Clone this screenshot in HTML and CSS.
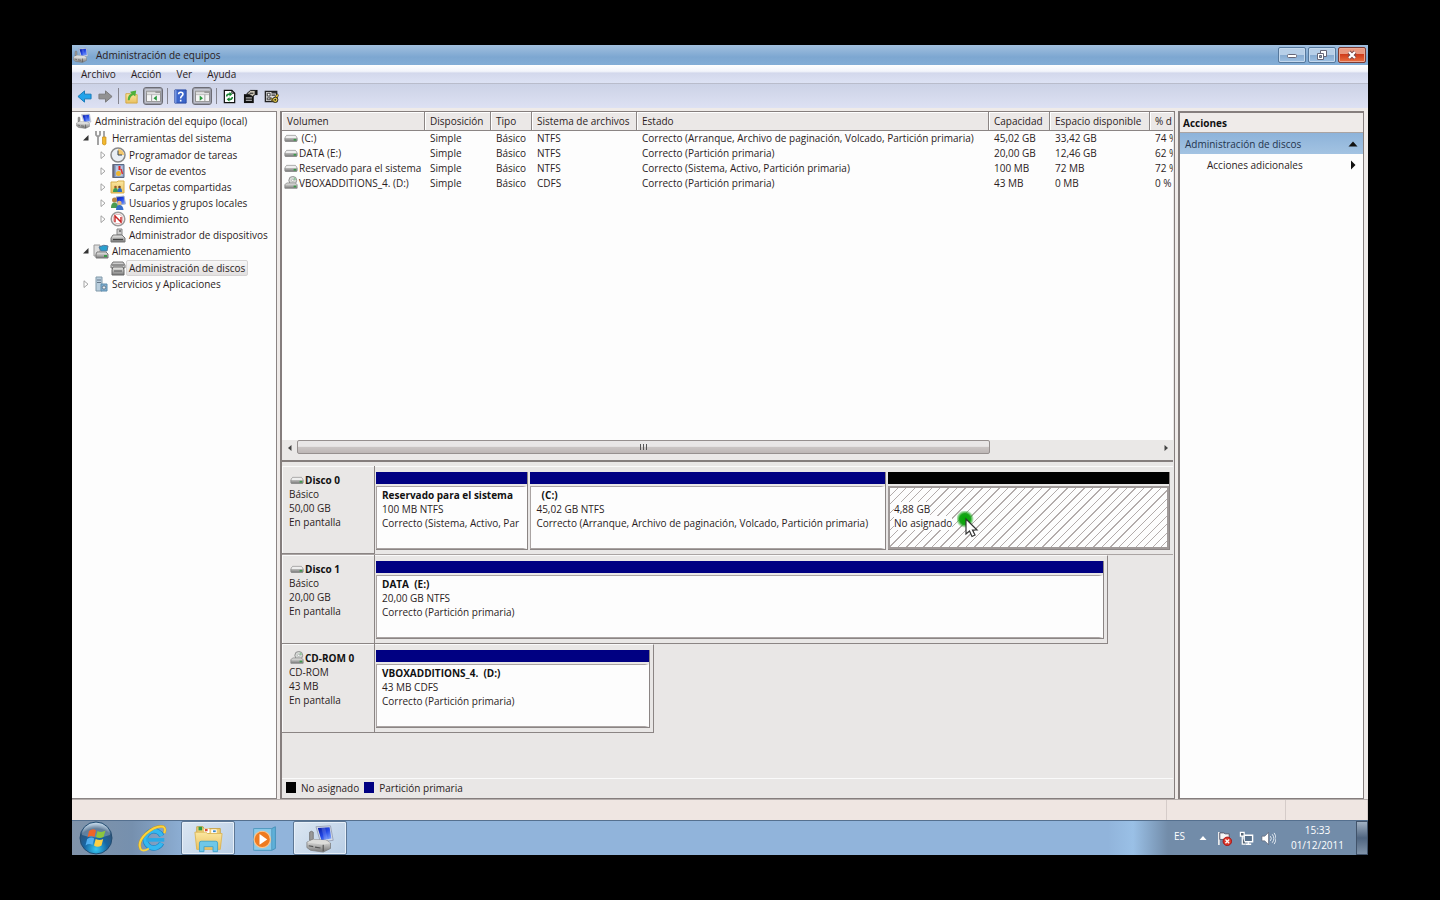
FILE: index.html
```html
<!DOCTYPE html>
<html lang="es">
  <head>
    <meta charset="utf-8">
    <title>Administración de equipos</title>
    <link rel="stylesheet" href="styles.css">
  </head>

  <body>
    <!-- shared icons -->
    <svg class="defs" aria-hidden="true">
      <defs>
        <linearGradient id="metal" x1="0" y1="0" x2="0" y2="1">
          <stop offset="0" stop-color="#f2f2f0"/><stop offset="1" stop-color="#777"/>
        </linearGradient>
        <linearGradient id="screenblue" x1="0" y1="0" x2="1" y2="1">
          <stop offset="0" stop-color="#0a1a9c"/><stop offset="0.5" stop-color="#2348e8"/><stop offset="1" stop-color="#8fb4ff"/>
        </linearGradient>
        <linearGradient id="gold" x1="0" y1="0" x2="0" y2="1">
          <stop offset="0" stop-color="#fbe7a0"/><stop offset="1" stop-color="#e9c060"/>
        </linearGradient>
        <radialGradient id="orb" cx="0.5" cy="0.85" r="0.8">
          <stop offset="0" stop-color="#35c8f2"/><stop offset="0.45" stop-color="#1766a4"/><stop offset="0.8" stop-color="#2f5479"/><stop offset="1" stop-color="#a9c4dc"/>
        </radialGradient>
        <radialGradient id="click">
          <stop offset="0" stop-color="#00a800"/><stop offset="0.6" stop-color="#16a516"/><stop offset="1" stop-color="#16a516" stop-opacity="0"/>
        </radialGradient>
      </defs>
      <symbol id="computer" viewBox="0 0 32 32">
        <path d="M11 3l16-1 3 16-14 2z" fill="#d4dbe8" stroke="#8a93a8" stroke-width=".8"/>
        <path d="M13 4.500l13-1 2 12.500-11 2z" fill="url(#screenblue)"/>
        <path d="M17 4.200l4-.3 3 12.800-4 .7z" fill="#fff" opacity=".15"/>
        <path d="M4 9q2-2 4 0v9H4z" fill="#999" stroke="#666" stroke-width=".8"/>
        <path d="M20 19l4-1 3 4-7 1z" fill="#aaa"/>
        <path d="M1 20l7-3 14 1 5 3v6l-8 4-14-2-4-3z" fill="url(#metal)" stroke="#777" stroke-width=".8"/>
        <path d="M1 20l7-3 14 1 5 3-8 2z" fill="#dcdcda"/>
        <path d="M19 23v7M3 24l5 1M10 25.500l6 1" fill="none" stroke="#555" stroke-width="1.300"/>
      </symbol>
      <symbol id="drive" viewBox="0 0 16 16">
        <path d="M3 5h10l2 3v3q0 1-1 1H2q-1 0-1-1V8z" fill="url(#metal)" stroke="#8a8a8a"/>
        <path d="M3 5.500h10l1.500 2.500h-13z" fill="#eee"/>
        <path d="M11 9h3v2h-3z" fill="#3b9a48"/>
      </symbol>
      <symbol id="cdrive" viewBox="0 0 16 16">
        <circle cx="10" cy="5" r="4.500" fill="#d5d8d5" stroke="#888"/>
        <path d="M10 5l2-4 2 3z" fill="#8fc79a"/>
        <circle cx="10" cy="5" r="1.300" fill="#fff" stroke="#888" stroke-width=".5"/>
        <path d="M3 8h10l2 2v4H1v-4z" fill="url(#metal)" stroke="#8a8a8a"/>
        <path d="M11 11h3v2h-3z" fill="#3b9a48"/>
      </symbol>
      <symbol id="open" viewBox="0 0 8 8"><path d="M6.500 1v5.500H1z" fill="#333"/></symbol>
      <symbol id="closed" viewBox="0 0 8 8"><path d="M2 .8l4 3.400-4 3.300z" fill="#fff" stroke="#999" stroke-width=".9"/></symbol>
      <symbol id="panes" viewBox="0 0 16 16">
        <path d="M.5 2.500h15v11H.5z" fill="#f5f5f5" stroke="#888"/>
        <path d="M0 2h16v2.500H0z" fill="#999"/><path d="M1 3h9v1H1z" fill="#eee"/>
        <path d="M1 6h14" stroke="#bbb"/>
      </symbol>
    </svg>

    <div class="window">
      <header class="titlebar">
        <svg class="icon"><use href="#computer"/></svg>
        <h1>Administración de equipos</h1>
        <div class="caption-buttons">
          <button type="button" aria-label="Minimizar"><svg viewBox="0 0 14 12"><rect x="2.500" y="5.500" width="9" height="3" rx="1" fill="#fff" stroke="#667"/></svg></button>
          <button type="button" aria-label="Restaurar"><svg viewBox="0 0 14 12"><path d="M5.500 1.500h6v6h-6z" fill="#fff" stroke="#667"/><path d="M2.500 4.500h6v6h-6z" fill="#fff" stroke="#667"/><path d="M4.500 6.500h2v2h-2z" fill="#8ab" stroke="#667"/></svg></button>
          <button type="button" class="close" aria-label="Cerrar"><svg viewBox="0 0 14 12"><path d="M4 3l6 6m0-6l-6 6" stroke="#744" stroke-width="4"/><path d="M4 3l6 6m0-6l-6 6" stroke="#fff" stroke-width="2.300"/></svg></button>
        </div>
      </header>

      <nav class="menubar">
        <a href="#archivo">Archivo</a>
        <a href="#accion">Acción</a>
        <a href="#ver">Ver</a>
        <a href="#ayuda">Ayuda</a>
      </nav>

      <div class="toolbar">
        <button type="button" aria-label="Atrás"><svg viewBox="0 0 16 16"><path d="M1 8l7-6v3.500h7v5H8V14z" fill="#22a3ea" stroke="#1579b8"/></svg></button>
        <button type="button" aria-label="Adelante"><svg viewBox="0 0 16 16"><path d="M15 8L8 2v3.500H1v5h7V14z" fill="#929292" stroke="#777"/></svg></button>
        <span class="sep"></span>
        <button type="button" aria-label="Subir un nivel"><svg viewBox="0 0 16 16"><path d="M2 5h5l1 1h6v9H2z" fill="url(#gold)" stroke="#d3a945"/><path d="M4 12q0-6 4-7L6.500 3l6.500-1.500L12 8l-2-1.500q-3 1-4 5.500z" fill="#4fb03a"/></svg></button>
        <button type="button" class="pressed" aria-label="Mostrar árbol"><svg viewBox="0 0 16 16"><use href="#panes"/><path d="M6 6v7" stroke="#999"/><path d="M11.500 7v5.500L8 9.800z" fill="#24983a"/></svg></button>
        <span class="sep"></span>
        <button type="button" aria-label="Ayuda"><svg viewBox="0 0 16 16"><path d="M2 1h12v14H2z" fill="#3c66cb" stroke="#2848a0"/><path d="M3 1v14" stroke="#9cb7f2"/><path d="M6 5.500q0-2 2.300-2t2.300 2q0 1-1.300 2T8.200 10M8.200 11.500v1.800" fill="none" stroke="#fff" stroke-width="1.700"/></svg></button>
        <button type="button" class="pressed" aria-label="Mostrar panel de acciones"><svg viewBox="0 0 16 16"><use href="#panes"/><path d="M10.500 6v7" stroke="#999"/><path d="M5 7v5.500l3.500-2.700z" fill="#24983a"/></svg></button>
        <span class="sep"></span>
        <button type="button" aria-label="Actualizar"><svg viewBox="0 0 16 16"><path d="M2.500 1.500h8l3 3v10h-11z" fill="#fff" stroke="#111" stroke-width="1.300"/><path d="M10.500 1.500v3h3" fill="none" stroke="#111"/><path d="M5 8q0-3 4-2.500M11 8.500q0 3-4 2.500" fill="none" stroke="#188632" stroke-width="1.700"/><path d="M8 3l3 2.500-3 2.500zM8 8.800L5 11l3 2.500z" fill="#188632"/></svg></button>
        <button type="button" aria-label="Propiedades"><svg viewBox="0 0 16 16"><path d="M1 5.500h10.500V15H1z" fill="#111"/><path d="M3 9.500h6.500M3 12h6.500" stroke="#ddd"/><path d="M4 5l4-3.500h5V6l-3 2-3-2z" fill="#c9c2b4" stroke="#111"/><path d="M13 1h2.500v5.500H13z" fill="#111"/><path d="M7 4.500h4" stroke="#111"/></svg></button>
        <button type="button" aria-label="Configuración"><svg viewBox="0 0 16 16"><path d="M1.500 2.500h12v11h-12z" fill="#ddd" stroke="#222" stroke-width="1.500"/><path d="M3.500 4.500h3v3h-3zM3.500 9.500h3v2h-3z" fill="#fff" stroke="#333"/><path d="M8 4h5M8 6.500h4" stroke="#333" stroke-width="1.400"/><path d="M7 9l3 2 4-6 1.500 1.500L12 14l-4-1z" fill="#edc62d" stroke="#222" stroke-width=".7"/><circle cx="12" cy="11.500" r="2.800" fill="#f0d447" stroke="#222"/><circle cx="12" cy="11.500" r="1" fill="#222"/></svg></button>
      </div>

      <main class="panes">
        <!-- console tree -->
        <aside class="tree">
          <ul>
            <li>
              <a href="#equipo" class="root"><svg class="icon"><use href="#computer"/></svg>Administración del equipo (local)</a>
              <ul>
                <li>
                  <a href="#herramientas"><svg class="arrow"><use href="#open"/></svg><svg class="icon" viewBox="0 0 16 16"><path d="M3 1v4l2 2 2-2V1M5 7v8" fill="none" stroke="#999" stroke-width="1.800"/><path d="M11 1v6" stroke="#888" stroke-width="1.500"/><path d="M9.500 7h3.500v7q-1.700 2-3.500 0z" fill="#f1b931" stroke="#c98e17" stroke-width=".7"/></svg>Herramientas del sistema</a>
                  <ul>
                    <li><a href="#tareas"><svg class="arrow"><use href="#closed"/></svg><svg class="icon" viewBox="0 0 16 16"><circle cx="8" cy="8" r="7" fill="#e9eef4" stroke="#888" stroke-width="1.500"/><path d="M8 8V2a6 6 0 0 1 6 6z" fill="#f3c76c"/><path d="M8 3.500V8h4" fill="none" stroke="#345"/></svg>Programador de tareas</a></li>
                    <li><a href="#eventos"><svg class="arrow"><use href="#closed"/></svg><svg class="icon" viewBox="0 0 16 16"><path d="M3 1.500h11v13H3z" fill="#8fa3c6" stroke="#5a6985"/><path d="M3.500 1v14" stroke="#667" stroke-width="2"/><path d="M6 3h6.500v10H6z" fill="#b9c9e4"/><path d="M9.500 3v4" stroke="#d22" stroke-width="2"/><circle cx="8.500" cy="10.500" r="2.500" fill="#ecb52f"/><path d="M11 6l1.500 5" stroke="#d33" stroke-width="1.500"/></svg>Visor de eventos</a></li>
                    <li><a href="#carpetas"><svg class="arrow"><use href="#closed"/></svg><svg class="icon" viewBox="0 0 16 16"><path d="M1 3h6l1-1h6v12H1z" fill="url(#gold)" stroke="#d6ae4c"/><circle cx="5.500" cy="8" r="1.300" fill="#9c5b25"/><circle cx="9.500" cy="8" r="1.300" fill="#74451d"/><path d="M3 13q0-4 2.500-4T8 13z" fill="#3b9952"/><path d="M7.500 13q0-4 2.300-4t2.200 4z" fill="#2d6cc4"/></svg>Carpetas compartidas</a></li>
                    <li><a href="#usuarios"><svg class="arrow"><use href="#closed"/></svg><svg class="icon" viewBox="0 0 16 16"><path d="M6 2l8-1 1.500 8-8 1z" fill="url(#screenblue)" stroke="#a8b4c8"/><circle cx="4.500" cy="5" r="2.500" fill="#b98346"/><path d="M1 13q0-5.500 3.500-5.500T8 13z" fill="#4a9b52"/><circle cx="9.500" cy="8" r="2.200" fill="#e3b77c"/><path d="M6 15q0-5 3.500-5t4 5z" fill="#356ecb"/></svg>Usuarios y grupos locales</a></li>
                    <li><a href="#rendimiento"><svg class="arrow"><use href="#closed"/></svg><svg class="icon" viewBox="0 0 16 16"><circle cx="8" cy="8" r="6.800" fill="#fff" stroke="#999" stroke-width="1.500"/><circle cx="8" cy="8" r="4.800" fill="none" stroke="#daa"/><path d="M5 11V5l6 6V6" fill="none" stroke="#c92525" stroke-width="1.400"/></svg>Rendimiento</a></li>
                    <li><a href="#dispositivos"><span class="arrow"></span><svg class="icon" viewBox="0 0 16 16"><path d="M7 2h5v6H7z" fill="#ccc" stroke="#888"/><path d="M9 4h2" stroke="#333"/><path d="M3 8h9l3 3v4H1v-4z" fill="url(#metal)" stroke="#777"/><path d="M3 12.500h10" stroke="#444" stroke-width="1.300"/></svg>Administrador de dispositivos</a></li>
                  </ul>
                </li>
                <li>
                  <a href="#almacenamiento"><svg class="arrow"><use href="#open"/></svg><svg class="icon" viewBox="0 0 16 16"><path d="M1 2h6v11H1z" fill="#ddd" stroke="#999"/><path d="M6 4q5-3 9-1l-1 5H8z" fill="#2aa0cf" stroke="#579"/><path d="M4 9h9l2 2v4H3v-4z" fill="url(#metal)" stroke="#777"/><path d="M11 12h3v2h-3z" fill="#3b9a48"/></svg>Almacenamiento</a>
                  <ul>
                    <li><a href="#discos"><span class="arrow"></span><svg class="icon" viewBox="0 0 16 16"><path d="M3 2h10l2 3v3H1V5z" fill="#ccc" stroke="#777"/><path d="M3 7h10l1 3v5H2v-5z" fill="url(#metal)" stroke="#666"/><path d="M4 11h8M2 5h12" stroke="#555"/></svg><span class="selected">Administración de discos</span></a></li>
                  </ul>
                </li>
                <li><a href="#servicios"><svg class="arrow"><use href="#closed"/></svg><svg class="icon" viewBox="0 0 16 16"><path d="M3 1h6v14H3z" fill="#b9cedd" stroke="#8199a9"/><path d="M4 4h4M4 6.500h4" stroke="#678"/><path d="M8 8h6v7H8z" fill="#7fb0d3" stroke="#5e8cac"/><circle cx="11" cy="11.500" r="1.700" fill="#e5eef4" stroke="#678"/></svg>Servicios y Aplicaciones</a></li>
              </ul>
            </li>
          </ul>
        </aside>

        <section class="center">
          <div class="volumes">
            <table>
              <colgroup>
                <col class="c-vol"><col class="c-disp"><col class="c-tipo"><col class="c-fs"><col class="c-estado"><col class="c-cap"><col class="c-esp"><col class="c-pct">
              </colgroup>
              <thead>
                <tr><th>Volumen</th><th>Disposición</th><th>Tipo</th><th>Sistema de archivos</th><th>Estado</th><th>Capacidad</th><th>Espacio disponible</th><th>% d</th></tr>
              </thead>
              <tbody>
                <tr><td><svg class="vol"><use href="#drive"/></svg>&nbsp;(C:)</td><td>Simple</td><td>Básico</td><td>NTFS</td><td>Correcto (Arranque, Archivo de paginación, Volcado, Partición primaria)</td><td>45,02 GB</td><td>33,42 GB</td><td>74 %</td></tr>
                <tr><td><svg class="vol"><use href="#drive"/></svg>DATA (E:)</td><td>Simple</td><td>Básico</td><td>NTFS</td><td>Correcto (Partición primaria)</td><td>20,00 GB</td><td>12,46 GB</td><td>62 %</td></tr>
                <tr><td><svg class="vol"><use href="#drive"/></svg>Reservado para el sistema</td><td>Simple</td><td>Básico</td><td>NTFS</td><td>Correcto (Sistema, Activo, Partición primaria)</td><td>100 MB</td><td>72 MB</td><td>72 %</td></tr>
                <tr><td><svg class="vol"><use href="#cdrive"/></svg>VBOXADDITIONS_4. (D:)</td><td>Simple</td><td>Básico</td><td>CDFS</td><td>Correcto (Partición primaria)</td><td>43 MB</td><td>0 MB</td><td>0 %</td></tr>
              </tbody>
            </table>
            <div class="hscroll">
              <button type="button" aria-label="Desplazar a la izquierda"><svg viewBox="0 0 8 8"><path d="M5.500 1v6L2 4z" fill="#444"/></svg></button>
              <div class="track"><div class="thumb"><i></i><i></i><i></i></div></div>
              <button type="button" aria-label="Desplazar a la derecha"><svg viewBox="0 0 8 8"><path d="M2.500 1v6L6 4z" fill="#444"/></svg></button>
            </div>
          </div>

          <div class="disks">
            <div class="disk">
              <div class="disk-label">
                <b><svg class="vol"><use href="#drive"/></svg>Disco 0</b>
                <p>Básico</p><p>50,00 GB</p><p>En pantalla</p>
              </div>
              <div class="partitions">
                <div class="part p-system">
                  <div class="part-body"><b>Reservado para el sistema</b><p>100 MB NTFS</p><p>Correcto (Sistema, Activo, Par</p></div>
                </div>
                <div class="part p-c">
                  <div class="part-body"><b>&nbsp;&nbsp;(C:)</b><p>45,02 GB NTFS</p><p>Correcto (Arranque, Archivo de paginación, Volcado, Partición primaria)</p></div>
                </div>
                <div class="part p-free unallocated">
                  <div class="part-body"><b>&nbsp;&nbsp;</b><p><span>4,88 GB</span></p><p><span>No asignado</span></p></div>
                  <svg class="pointer" viewBox="0 0 24 28"><circle cx="8" cy="8" r="9" fill="url(#click)"/><path d="M9 8v15l3.500-3 2.500 5.500 3-1.500-2.500-5h4.500z" fill="#fff" stroke="#333" stroke-width="1.200"/></svg>
                </div>
              </div>
            </div>

            <div class="disk">
              <div class="disk-label">
                <b><svg class="vol"><use href="#drive"/></svg>Disco 1</b>
                <p>Básico</p><p>20,00 GB</p><p>En pantalla</p>
              </div>
              <div class="partitions w-data">
                <div class="part">
                  <div class="part-body"><b>DATA&nbsp; (E:)</b><p>20,00 GB NTFS</p><p>Correcto (Partición primaria)</p></div>
                </div>
              </div>
            </div>

            <div class="disk">
              <div class="disk-label">
                <b><svg class="vol"><use href="#cdrive"/></svg>CD-ROM 0</b>
                <p>CD-ROM</p><p>43 MB</p><p>En pantalla</p>
              </div>
              <div class="partitions w-cd">
                <div class="part">
                  <div class="part-body"><b>VBOXADDITIONS_4.&nbsp; (D:)</b><p>43 MB CDFS</p><p>Correcto (Partición primaria)</p></div>
                </div>
              </div>
            </div>
          </div>

          <div class="legend">
            <span class="swatch black"></span>No asignado
            <span class="swatch navy"></span>Partición primaria
          </div>
        </section>

        <aside class="actions">
          <h2>Acciones</h2>
          <button type="button" class="group">Administración de discos<svg viewBox="0 0 10 10"><path d="M5 2.500L9.500 7.500h-9z" fill="#111"/></svg></button>
          <button type="button" class="more">Acciones adicionales<svg viewBox="0 0 10 10"><path d="M3 .5L7.500 5 3 9.500z" fill="#111"/></svg></button>
        </aside>
      </main>

      <footer class="statusbar"><span></span><span></span><span></span></footer>

      <!-- taskbar -->
      <div class="taskbar">
        <button type="button" class="start" aria-label="Inicio"><svg viewBox="0 0 34 34"><circle cx="17" cy="17" r="16" fill="url(#orb)" stroke="#234c70"/><path d="M3 14a14 12 0 0 1 28 0q-14 5-28 0z" fill="#fff" opacity=".25"/><path d="M10 10q4-3 7-.5L15.500 16q-4-2-7 .5z" fill="#ee6529"/><path d="M18.500 10q4 2 8-.5L24.500 16q-4 2-7.500 0z" fill="#8cc63e"/><path d="M8.200 18q4-2.500 7-.5l-1.700 6.500q-3.500-2-7 .5z" fill="#52aff0"/><path d="M16.700 18q4 2 7.500 0l-1.700 6.500q-4 2.500-7.500 0z" fill="#fdd044"/></svg></button>
        <button type="button" class="task ie" aria-label="Internet Explorer"><svg viewBox="0 0 32 32"><circle cx="17.500" cy="17" r="9.500" fill="none" stroke="#1c86c6" stroke-width="6" stroke-dasharray="51 8.700" transform="rotate(26 17.500 17)"/><circle cx="17.500" cy="17" r="9.500" fill="none" stroke="#35b8f0" stroke-width="4.500" stroke-dasharray="51 8.700" transform="rotate(26 17.500 17)"/><path d="M9 15.500h20v4H9z" fill="#2ba9e6"/><path d="M3 28Q-1 20 9 10.500 20 1 28 3q3 2 1 7" fill="none" stroke="#c99a1c" stroke-width="3"/><path d="M3 28Q-1 20 9 10.500 20 1 28 3q3 2 1 7M3 28q3 3 9-1" fill="none" stroke="#f9d23f" stroke-width="2.200"/></svg></button>
        <button type="button" class="task open" aria-label="Explorador de Windows"><svg viewBox="0 0 32 32"><path d="M3 3h7l1 2h18v20H3z" fill="#edcd73" stroke="#c6a24a"/><path d="M5 3h4v4H5z" fill="#2e9b42"/><path d="M11 5h6v5h-6z" fill="#fff"/><path d="M12 5.500h3v2.500h-3z" fill="#db4a2f"/><path d="M19 6h6v5h-6z" fill="#fff"/><path d="M21 7h3v2h-3z" fill="#3a86c8"/><path d="M1 9h12l2 1.500h16L29 28H3z" fill="url(#gold)" stroke="#dcb658"/><path d="M6 30.500V21q0-2 2-2h16q2 0 2 2v9.500h-5V25H11v5.500z" fill="#6ec7e8" stroke="#3fa2cc"/></svg></button>
        <button type="button" class="task" aria-label="Reproductor de Windows Media"><svg viewBox="0 0 32 32"><path d="M6 5h18l4-2v24l-4 2H6z" fill="#5fb0d9" stroke="#438fb8"/><path d="M4 5h20v24H4z" fill="#8ccbe9" stroke="#5298be"/><circle cx="13.500" cy="17" r="9" fill="#ee7b20" stroke="#fbc58e" stroke-width="1.300"/><path d="M10.500 11l8.500 6-8.500 6z" fill="#fff"/></svg></button>
        <button type="button" class="task open" aria-label="Administración de equipos"><svg><use href="#computer"/></svg></button>

        <div class="tray">
          <span class="lang">ES</span>
          <svg class="chevron" viewBox="0 0 10 10"><path d="M5 3l3.500 4h-7z" fill="#fff"/></svg>
          <svg viewBox="0 0 16 16"><path d="M2 1v14" stroke="#eee" stroke-width="1.800"/><path d="M3 2h4l2 1h4v7H9L7 9H3z" fill="#f5f5f5" stroke="#556"/><circle cx="11" cy="11" r="4.500" fill="#dd3a2c" stroke="#a11"/><path d="M9 9l4 4m0-4l-4 4" stroke="#fff" stroke-width="1.400"/></svg>
          <svg viewBox="0 0 16 16"><path d="M5.500 4.500h9v7h-9z" fill="#58718c" stroke="#fff" stroke-width="1.500"/><path d="M7 14h6M10 12v2" stroke="#fff" stroke-width="1.600"/><path d="M1.500 1.500h4v4h-4zM3.500 6v8H7" fill="#567" stroke="#fff" stroke-width="1.300"/></svg>
          <svg viewBox="0 0 16 16"><path d="M1 5.500h3L8 1.500v13l-4-4H1z" fill="#fff" stroke="#556" stroke-width=".6"/><path d="M10 5.500q2 2.500 0 5M12 3.500q3.500 4.500 0 9M14 2q4 6 0 12" fill="none" stroke="#e8eef4"/></svg>
          <time datetime="2011-12-01T15:33">15:33<br>01/12/2011</time>
          <button type="button" class="peek" aria-label="Mostrar escritorio"></button>
        </div>
      </div>
    </div>
  </body>
</html>
```

FILE: styles.css
```css
* {
  box-sizing: border-box;
}
body {
  margin: 0;
  min-height: 100vh;
  padding: 5vh 5vw;
  display: flex;
  background: #000;
  color: #2b1c1c;
  font: 10px/14px "Open Sans", "Noto Sans", sans-serif;
}
ul, p, h1, h2 {
  margin: 0;
  padding: 0;
  font-size: inherit;
}
ul {
  list-style: none;
}
a {
  color: inherit;
  text-decoration: none;
}
button {
  margin: 0;
  padding: 0;
  border: 0;
  background: none;
  color: inherit;
  font: inherit;
}
svg {
  display: block;
  flex: none;
}
.defs {
  position: absolute;
  width: 0;
  height: 0;
}
.icon {
  width: 16px;
  height: 16px;
}

.window {
  flex: 1;
  min-width: 0;
  display: flex;
  flex-direction: column;
  background: #efebe9;
}

/* title, menu, toolbar */
.titlebar {
  height: 20px;
  display: flex;
  align-items: center;
  gap: 7px;
  padding: 0 2px 0 1px;
  background: linear-gradient(#a2c0df, #7da7d1 60%, #83add6);
}
.titlebar h1 {
  flex: 1;
  font-weight: normal;
}
.caption-buttons {
  display: flex;
  gap: 2px;
}
.caption-buttons button {
  width: 28px;
  height: 16px;
  display: flex;
  align-items: center;
  justify-content: center;
  border: 1px solid #56789c;
  border-radius: 2px;
  background: linear-gradient(#b7cfe8 50%, #86aad0 50%, #9dc0e2);
  box-shadow: inset 0 0 0 1px #c5d9ee;
}
.caption-buttons .close {
  border-color: #7c3a32;
  background: linear-gradient(#e9987f 45%, #cf3b1a 45%, #ea7141);
  box-shadow: inset 0 0 0 1px #eda690;
}
.caption-buttons svg {
  width: 14px;
  height: 12px;
}
.menubar {
  height: 19px;
  display: flex;
  align-items: center;
  gap: 15px;
  padding: 0 9px;
  border-bottom: 1px solid #b9bccb;
  background: linear-gradient(#fff, #f2f4fb 35%, #d3d8ec 45%, #dde2f4);
}
.toolbar {
  height: 24px;
  display: flex;
  align-items: center;
  gap: 3px;
  padding: 0 3px;
  background: linear-gradient(#ccd2e6, #dde1f3);
}
.toolbar button {
  width: 18px;
  height: 18px;
  display: flex;
  align-items: center;
  justify-content: center;
}
.toolbar svg {
  width: 15px;
  height: 15px;
}
.toolbar .pressed {
  width: 20px;
  border: 1px solid #6c6c74;
  border-radius: 3px;
  background: #c3c5d0;
  box-shadow: inset 0 0 0 1px #9a9ca8;
}
.toolbar .sep {
  width: 1px;
  height: 16px;
  margin-left: 1px;
  background: #85858f;
}

/* three panes */
.panes {
  flex: 1;
  min-height: 0;
  margin-top: 3px;
  display: grid;
  grid-template-columns: 205px minmax(0, 1fr) 186px;
  gap: 3px;
  padding-right: 4px;
}
.tree {
  padding-top: 1px;
  border: solid #8b8584;
  border-width: 1px 1px 1px 0;
  background: #fdfdfd;
  white-space: nowrap;
}
.tree ul ul {
  padding-top: 1px;
}
.tree a {
  height: 16px;
  display: flex;
  align-items: center;
  gap: 3px;
  padding-left: 10px;
}
.tree .root {
  padding-left: 4px;
}
.tree ul ul ul a {
  padding-left: 27px;
}
.tree .arrow {
  width: 8px;
  height: 8px;
}
.tree .selected {
  margin-left: -3px;
  padding: 0 2px;
  border: 1px solid #d6d4d4;
  border-radius: 2px;
  background: linear-gradient(#f7f7f7, #e2e0e0);
}

.center {
  display: flex;
  flex-direction: column;
  border: solid #857e7d;
  border-width: 1px 1px 1px 2px;
  background: #e9e7e6;
  padding-right: 1px;
}
.volumes {
  height: 350px;
  display: flex;
  flex-direction: column;
  justify-content: space-between;
  overflow: hidden;
  border-bottom: 2px solid #857e7d;
  background: #fdfdfd;
}
.volumes table {
  width: 928px;
  table-layout: fixed;
  border-collapse: separate;
  border-spacing: 0;
}
.c-vol { width: 143px; }
.c-disp { width: 66px; }
.c-tipo { width: 41px; }
.c-fs { width: 105px; }
.c-estado { width: 352px; }
.c-cap { width: 61px; }
.c-esp { width: 100px; }
.c-pct { width: 60px; }
.volumes th {
  height: 19px;
  padding: 0 5px;
  border: solid #8b8584;
  border-width: 0 1px 1px 0;
  background: #ebe8e7;
  box-shadow: inset 1px 1px #fff;
  font-weight: normal;
  text-align: left;
  line-height: 18px;
  white-space: nowrap;
}
.volumes td {
  height: 15px;
  padding: 0 0 0 5px;
  line-height: 15px;
  white-space: nowrap;
}
.volumes td:first-child {
  padding-left: 1px;
}
.vol {
  display: inline-block;
  width: 16px;
  height: 14px;
  vertical-align: top;
}
.hscroll {
  height: 20px;
  padding-bottom: 5px;
  display: flex;
  background: #eae8e7;
}
.hscroll button {
  width: 15px;
  display: flex;
  align-items: center;
  justify-content: center;
}
.hscroll svg {
  width: 8px;
  height: 8px;
}
.track {
  flex: 1;
}
.thumb {
  width: 80.5%;
  height: 14px;
  display: flex;
  align-items: center;
  justify-content: center;
  gap: 1px;
  border: 1px solid #96908f;
  border-radius: 2px;
  background: linear-gradient(#e9e7e7 45%, #cbc6c5 50%, #bdb7b6);
}
.thumb i {
  width: 2px;
  height: 6px;
  border-left: 1px solid #555;
}

/* graphical disk view */
.disks {
  flex: 1;
  padding-top: 4px;
}
.disk {
  height: 89px;
  display: flex;
}
.disk:first-child {
  border-bottom: 1px solid #aaa4a3;
}
.disk-label {
  width: 93px;
  padding: 7px 7px 0;
  border: solid #8b8584;
  border-width: 0 1px 1px 0;
  box-shadow: inset 1px 1px #fafafa;
}
.disk b {
  display: block;
  color: #111;
  white-space: pre;
}
.partitions {
  flex: 1;
  min-width: 0;
  display: flex;
  gap: 2px;
  padding: 5px 3px 4px 1px;
  border-top: 1px solid #fafafa;
}
.w-data {
  flex: 0 0 733px;
  border-right: 1px solid #8b8584;
  border-bottom: 1px solid #8b8584;
}
.w-cd {
  flex: 0 0 279px;
  border-right: 1px solid #8b8584;
  border-bottom: 1px solid #8b8584;
}
.part {
  flex: 1;
  min-width: 0;
  position: relative;
  display: flex;
  flex-direction: column;
  border-right: 1px solid #8b8584;
  border-bottom: 1px solid #8b8584;
}
.part::before {
  content: "";
  height: 12px;
  flex: none;
  background: #000082;
}
.p-system { flex: 152 1 0; }
.p-c { flex: 356 1 0; }
.p-free { flex: 282 1 0; }
.part-body {
  flex: 1;
  margin-top: 2px;
  padding: 1px 5px 0;
  overflow: hidden;
  border: 1px solid #aaa4a3;
  border-right: 4px solid #fdfdfd;
  background: #fdfdfd;
  white-space: nowrap;
}
.unallocated::before {
  background: #000;
}
.unallocated .part-body {
  padding: 0 4px;
  border: 2px solid #a09a99;
  background: repeating-linear-gradient(135deg, #fdfdfd 0 5px, #b3acab 5px 6px);
}
.unallocated span {
  display: inline-block;
  background: #fdfdfd;
}
.pointer {
  position: absolute;
  left: 69px;
  top: 39px;
  width: 24px;
  height: 28px;
}
.legend {
  height: 20px;
  display: flex;
  align-items: center;
  gap: 5px;
  padding: 0 4px 2px;
  border-top: 1px solid #fafafa;
}
.swatch {
  width: 10px;
  height: 11px;
}
.black { background: #000; }
.navy { background: #000082; }

.actions {
  border: solid #857e7d;
  border-width: 2px 1px 1px 2px;
  background: #fdfdfd;
}
.actions h2 {
  height: 20px;
  padding-left: 3px;
  border-bottom: 1px solid #aaa4a3;
  background: #efebe9;
  color: #111;
  line-height: 20px;
}
.actions button {
  width: 100%;
  height: 21px;
  display: flex;
  align-items: center;
  justify-content: space-between;
  padding: 0 5px;
}
.actions .group {
  background: linear-gradient(#8db3da, #a3c3e2);
  color: #24344e;
}
.actions .more {
  padding-left: 27px;
}
.actions svg {
  width: 10px;
  height: 10px;
}

.statusbar {
  height: 21px;
  display: flex;
  border-top: 1px solid #b5aeac;
  background: #efe6e2;
}
.statusbar span {
  width: 119px;
  border-right: 1px solid #d5ccc9;
}
.statusbar span:first-child {
  flex: 1;
}
.statusbar span:last-child {
  width: 82px;
}

.taskbar {
  height: 35px;
  display: flex;
  align-items: stretch;
  border-top: 1px solid #55708f;
  background: linear-gradient(90deg, #8093a9, #7690ae 60px, #91b4db 120px, #91b4db calc(100% - 260px), #9ac0e6 calc(100% - 235px), #728ca9 calc(100% - 200px), #728ca9);
}
.taskbar > button {
  display: flex;
  align-items: center;
  justify-content: center;
}
.start {
  width: 48px;
}
.start svg {
  width: 34px;
  height: 34px;
}
.task {
  width: 54px;
  margin-right: 2px;
}
.task svg {
  width: 29px;
  height: 29px;
}
.ie {
  margin-left: 5px;
}
.taskbar .open {
  border: 1px solid #5d7795;
  border-radius: 2px;
  background: linear-gradient(135deg, #dbe6f2, #b9cee5);
  box-shadow: inset 0 0 0 1px #e6eff8;
}
.tray {
  margin-left: auto;
  display: flex;
  align-items: center;
  gap: 7px;
  color: #fff;
}
.tray svg {
  width: 15px;
  height: 15px;
}
.tray .lang {
  padding-bottom: 4px;
}
.tray .chevron {
  width: 10px;
  height: 10px;
  margin: 0 2px 0 6px;
}
.tray time {
  margin: 0 5px 0 8px;
  line-height: 15px;
  text-align: center;
}
.peek {
  width: 12px;
  align-self: stretch;
  border: 1px solid #41536a;
  background: linear-gradient(#a0b0c2, #4f6580 50%, #8093a9);
}
```
